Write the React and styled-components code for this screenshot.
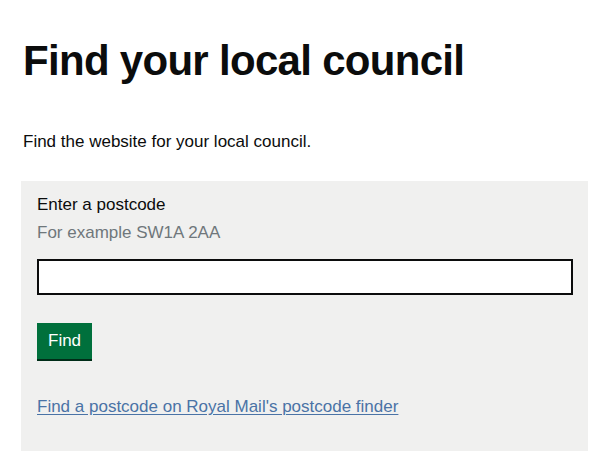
import styled, { createGlobalStyle } from 'styled-components';

const GlobalStyle = createGlobalStyle`
  html, body {
    margin: 0;
    padding: 0;
    background: #fff;
  }
  body {
    font-family: 'Liberation Sans', Arial, sans-serif;
    color: #0b0c0c;
  }
`;

function App() {
    return (
        <Page>
            <GlobalStyle />
            <Title>Find your local council</Title>
            <Lead>Find the website for your local council.</Lead>
            <Panel>
                <Label htmlFor="postcode">Enter a postcode</Label>
                <Hint>For example SW1A 2AA</Hint>
                <Input id="postcode" type="text" />
                <FindButton>Find</FindButton>
                <Link href="#">Find a postcode on Royal Mail's postcode finder</Link>
            </Panel>
        </Page>
    );
}

export default App;

const Page = styled.div`
    padding: 36px 12px 20px 23px;
`;

const Title = styled.h1`
    margin: 0;
    font-size: 42px;
    line-height: 50px;
    font-weight: 700;
    letter-spacing: -0.7px;
    color: #0b0c0c;
`;

const Lead = styled.p`
    margin: 44px 0 0;
    font-size: 17px;
    line-height: 24px;
    color: #0b0c0c;
`;

const Panel = styled.div`
    margin: 27px 0 0 -2px;
    width: 567px;
    box-sizing: border-box;
    background: #f0f0ef;
    padding: 12px 16px 32px;
    display: flex;
    flex-direction: column;
    align-items: flex-start;
`;

const Label = styled.label`
    font-size: 17px;
    line-height: 24px;
    color: #0b0c0c;
`;

const Hint = styled.div`
    margin-top: 4px;
    font-size: 17px;
    line-height: 24px;
    color: #6f777b;
`;

const Input = styled.input`
    margin-top: 14px;
    width: 536px;
    height: 36px;
    box-sizing: border-box;
    border: 2px solid #0b0c0c;
    background: #fff;
    outline: none;
`;

const FindButton = styled.button`
    margin-top: 28px;
    height: 38px;
    padding: 0 11px;
    border: none;
    border-bottom: 2px solid #002d18;
    background: #00703c;
    color: #fff;
    font-family: 'Liberation Sans', Arial, sans-serif;
    font-size: 17px;
    cursor: pointer;
`;

const Link = styled.a`
    margin-top: 34px;
    font-size: 17px;
    line-height: 24px;
    color: #4a73a6;
    text-decoration: underline;
    text-underline-offset: 2px;
`;
